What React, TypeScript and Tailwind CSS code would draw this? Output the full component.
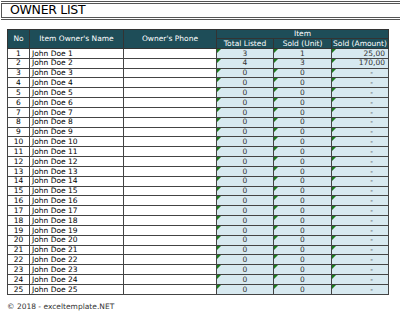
const owners = Array.from({ length: 25 }, (_, index) => ({
  no: index + 1,
  name: `John Doe ${index + 1}`,
  listed: index === 0 ? 3 : index === 1 ? 4 : 0,
  soldUnit: index === 0 ? 1 : index === 1 ? 3 : 0,
  soldAmount: index === 0 ? "25,00" : index === 1 ? "170,00" : "-",
}));

// Small green marker Excel draws in the corner of flagged cells
function CellFlag() {
  return <span className="absolute left-0 top-0 w-0 h-0 border-t-[4px] border-r-[4px] border-t-[#1b7a1b] border-r-transparent" />;
}

export default function App() {
  return (
    <div className="w-[400px] h-[312px] bg-white overflow-hidden text-black" style={{ fontFamily: '"DejaVu Sans", sans-serif' }}>

      {/* TITLE BAR */}
      <div className="mt-px h-[19px] border-y-[3px] border-double border-[#555] border-l border-l-[#555] ml-px flex items-center pl-[8px]">
        <span className="text-[12.5px] leading-none tracking-[-0.3px]">OWNER LIST</span>
      </div>

      {/* OWNER TABLE */}
      <table className="ml-[7px] mt-[9px] table-fixed border-collapse text-[7.5px] leading-none">
        <colgroup>
          <col className="w-[22px]" />
          <col className="w-[94px]" />
          <col className="w-[93px]" />
          <col className="w-[57px]" />
          <col className="w-[58px]" />
          <col className="w-[57px]" />
        </colgroup>
        <thead className="bg-[#1e4d58] text-white">
          <tr className="h-[9px]">
            <th rowSpan={2} className="border border-[#333] font-normal">No</th>
            <th rowSpan={2} className="border border-[#333] font-normal">Item Owner's Name</th>
            <th rowSpan={2} className="border border-[#333] font-normal">Owner's Phone</th>
            <th colSpan={3} className="border border-[#333] font-normal">Item</th>
          </tr>
          <tr className="h-[10px]">
            <th className="border border-[#333] font-normal whitespace-nowrap">Total Listed</th>
            <th className="border border-[#333] font-normal whitespace-nowrap">Sold (Unit)</th>
            <th className="border border-[#333] font-normal whitespace-nowrap overflow-hidden">Sold (Amount)</th>
          </tr>
        </thead>
        <tbody>
          {owners.map((owner) => (
            <tr key={owner.no} className="h-[9.84px]">
              <td className="border border-[#444] text-center p-0">{owner.no}</td>
              <td className="border border-[#444] pl-[2px] p-0 whitespace-nowrap">{owner.name}</td>
              <td className="border border-[#444] p-0" />
              <td className="relative border border-[#444] bg-[#d7e9f0] text-center text-[#333] p-0">
                <CellFlag />
                {owner.listed}
              </td>
              <td className="relative border border-[#444] bg-[#d7e9f0] text-center text-[#333] p-0">
                <CellFlag />
                {owner.soldUnit}
              </td>
              <td className={`relative border border-[#444] bg-[#d7e9f0] text-right text-[#333] p-0 ${owner.soldAmount === "-" ? "pr-[15px]" : "pr-[3px]"}`}>
                <CellFlag />
                {owner.soldAmount}
              </td>
            </tr>
          ))}
        </tbody>
      </table>

      {/* FOOTER */}
      <p className="ml-[7px] mt-[8px] text-[7.5px] leading-none text-[#333]">© 2018 - exceltemplate.NET</p>
    </div>
  );
}
